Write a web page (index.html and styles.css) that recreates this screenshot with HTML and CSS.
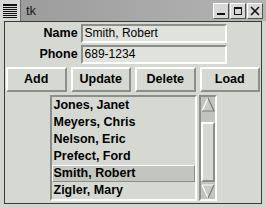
FILE: index.html
```html
<!DOCTYPE html>
<html lang="en">
<head>
    <meta charset="UTF-8">
    <title>tk</title>
    <link rel="stylesheet" href="styles.css">
</head>
<body>

    <!-- Titelbalk -->
    <div class="titlebar">
        <div class="menu-button">
            <svg width="16" height="16" viewBox="0 0 16 16">
                <rect x="1" y="1" width="14" height="2" fill="#111"/>
                <rect x="1" y="4" width="14" height="1" fill="#111"/>
                <rect x="1" y="6" width="14" height="1" fill="#111"/>
                <rect x="1" y="8" width="14" height="1" fill="#111"/>
                <rect x="1" y="10" width="14" height="1" fill="#111"/>
                <rect x="1" y="12" width="14" height="1" fill="#111"/>
                <rect x="1" y="14" width="14" height="1" fill="#111"/>
            </svg>
        </div>
        <div class="title">tk</div>
        <div class="controls">
            <div class="ctrl">
                <svg width="14" height="14" viewBox="0 0 14 14"><rect x="3" y="9" width="8" height="2" fill="#111"/></svg>
            </div>
            <div class="ctrl">
                <svg width="14" height="14" viewBox="0 0 14 14"><rect x="3.5" y="3.5" width="7" height="7" fill="none" stroke="#111"/><rect x="3" y="3" width="8" height="2" fill="#111"/></svg>
            </div>
            <div class="ctrl">
                <svg width="14" height="14" viewBox="0 0 14 14"><path d="M3 3 L11 11 M11 3 L3 11" stroke="#111" stroke-width="1.6"/></svg>
            </div>
        </div>
    </div>

    <div class="frame">
        <div class="client">

            <div class="form">
                <div class="label">Name</div>
                <div class="entry">Smith, Robert</div>
                <div class="label">Phone</div>
                <div class="entry">689-1234</div>
            </div>

            <div class="buttons">
                <div class="button">Add</div>
                <div class="button">Update</div>
                <div class="button">Delete</div>
                <div class="button">Load</div>
            </div>

            <div class="list-area">
                <div class="listbox">
                    <div class="item">Jones, Janet</div>
                    <div class="item">Meyers, Chris</div>
                    <div class="item">Nelson, Eric</div>
                    <div class="item">Prefect, Ford</div>
                    <div class="item selected">Smith, Robert</div>
                    <div class="item">Zigler, Mary</div>
                </div>
                <div class="scrollbar">
                    <svg class="arrow" width="14" height="15" viewBox="0 0 14 15">
                        <polygon points="7,1 13,14 1,14" fill="#c8cbc4"/>
                        <path d="M7 1 L1 14" stroke="#ffffff" stroke-width="1.2"/>
                        <path d="M7 1 L13 14 L1 14" stroke="#7a7d77" stroke-width="1.2" fill="none"/>
                    </svg>
                    <div class="trough-top"></div>
                    <div class="slider"></div>
                    <svg class="arrow" width="14" height="15" viewBox="0 0 14 15">
                        <polygon points="1,1 13,1 7,14" fill="#c8cbc4"/>
                        <path d="M1 1 L13 1 M1 1 L7 14" stroke="#ffffff" stroke-width="1.2"/>
                        <path d="M13 1 L7 14" stroke="#7a7d77" stroke-width="1.2"/>
                    </svg>
                </div>
            </div>

        </div>
    </div>

</body>
</html>
```

FILE: styles.css
```css
body {
    margin: 0;
    width: 266px;
    height: 208px;
    background-color: #d3d5cf;
    font-family: "Liberation Sans", Arial, sans-serif;
    color: #000000;
    overflow: hidden;
}

/* Titelbalk */
.titlebar {
    display: flex;
    height: 21px;
    background: linear-gradient(to right, #9a9a9a, #b4b4b4);
}

.menu-button {
    width: 20px;
    height: 21px;
    background-color: #d8d8d8;
    display: flex;
    align-items: center;
    justify-content: center;
    border-right: 1px solid #6e6e6e;
}

.title {
    flex: 1;
    padding-left: 5px;
    font-size: 13px;
    line-height: 21px;
    color: #1a1a1a;
}

.controls {
    display: flex;
    gap: 1px;
    padding: 3px 3px 0 0;
}

.ctrl {
    width: 14px;
    height: 14px;
    background-color: #d8d8d8;
    border-top: 1px solid #ffffff;
    border-left: 1px solid #ffffff;
    border-right: 1px solid #505050;
    border-bottom: 1px solid #505050;
}

.ctrl svg {
    display: block;
}

/* Vensterrand */
.frame {
    padding: 0 4px 4px 4px;
}

.client {
    height: 181px;
    border: 1px solid #3a3a3a;
    background-color: #d6d9d2;
    display: flex;
    flex-direction: column;
}

/* Invoervelden */
.form {
    display: grid;
    grid-template-columns: auto 146px;
    column-gap: 3px;
    row-gap: 2px;
    justify-content: center;
    padding-top: 2px;
}

.label {
    font-size: 12.5px;
    font-weight: bold;
    text-align: right;
    line-height: 19px;
}

.entry {
    height: 15px;
    padding-left: 2px;
    font-size: 12px;
    line-height: 15px;
    background-color: #e0e2dc;
    border-top: 2px solid #8c8e88;
    border-left: 2px solid #8c8e88;
    border-right: 2px solid #ffffff;
    border-bottom: 2px solid #ffffff;
}

/* Knoppen */
.buttons {
    display: flex;
    gap: 4px;
    padding: 0 1px;
    margin-top: 3px;
}

.button {
    flex: 1;
    height: 21px;
    font-size: 12.5px;
    font-weight: bold;
    line-height: 21px;
    text-align: center;
    border-top: 2px solid #ffffff;
    border-left: 2px solid #ffffff;
    border-right: 2px solid #8c8e88;
    border-bottom: 2px solid #8c8e88;
}

/* Lijst met scrollbalk */
.list-area {
    display: flex;
    justify-content: center;
    gap: 2px;
    margin-top: 3px;
}

.listbox {
    width: 143px;
    height: 102px;
    border-top: 2px solid #8c8e88;
    border-left: 2px solid #8c8e88;
    border-right: 2px solid #ffffff;
    border-bottom: 2px solid #ffffff;
}

.item {
    height: 17px;
    line-height: 17px;
    padding-left: 2px;
    font-size: 12.5px;
    font-weight: bold;
}

.item.selected {
    height: 15px;
    line-height: 15px;
    padding-left: 1px;
    background-color: #c3c6bf;
    border-top: 1px solid #ffffff;
    border-left: 1px solid #ffffff;
    border-right: 1px solid #8c8e88;
    border-bottom: 1px solid #8c8e88;
}

.scrollbar {
    width: 14px;
    height: 102px;
    background-color: #c2c5be;
    border-top: 2px solid #8c8e88;
    border-left: 2px solid #8c8e88;
    border-right: 2px solid #ffffff;
    border-bottom: 2px solid #ffffff;
    display: flex;
    flex-direction: column;
}

.arrow {
    display: block;
    flex: none;
}

.trough-top {
    height: 10px;
}

.slider {
    flex: 1;
    margin-bottom: 2px;
    background-color: #d6d9d2;
    border-top: 2px solid #ffffff;
    border-left: 2px solid #ffffff;
    border-right: 2px solid #8c8e88;
    border-bottom: 2px solid #8c8e88;
}
```
